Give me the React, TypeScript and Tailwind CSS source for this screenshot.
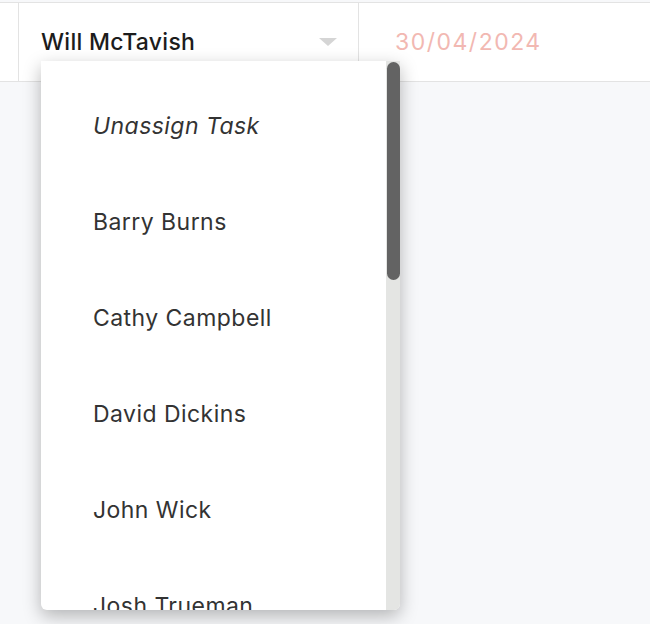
import React from 'react';

const people = ['Barry Burns', 'Cathy Campbell', 'David Dickins', 'John Wick', 'Josh Trueman'];

export default function App() {
  return (
    <div
      className="relative h-[624px] w-[650px] overflow-hidden bg-[#f7f8fa]"
      style={{ fontFamily: 'Inter, "Noto Sans", sans-serif' }}
    >
      <div className="mt-[2px] flex h-[80px] border-y border-[#e3e3e3] bg-white">
        <div className="w-[19px] border-r border-[#e3e3e3]" />
        <div className="flex w-[340px] items-center justify-between border-r border-[#e3e3e3] pl-[22px] pr-[21px]">
          <span className="text-[23px] font-medium tracking-[0.3px] text-[#1c1c1c]">Will McTavish</span>
          <svg width="18" height="8" viewBox="0 0 18 8">
            <path d="M0 0 L18 0 L9 8 Z" fill="#d5d5d5" />
          </svg>
        </div>
        <div className="flex flex-1 items-center pl-[36px]">
          <span className="text-[23px] tracking-[1.5px] text-[#f2b8b2]">30/04/2024</span>
        </div>
      </div>

      <div className="absolute left-[41px] top-[61px] flex h-[549px] w-[359px] overflow-hidden rounded-b-[6px] bg-white shadow-[0_6px_18px_rgba(0,0,0,0.28)]">
        <ul className="flex-1 overflow-hidden pt-[17px] text-[23px] tracking-[0.45px] text-[#333]">
          <li className="flex h-[96px] items-center pl-[52px] italic">Unassign Task</li>
          {people.map((name) => (
            <li key={name} className="flex h-[96px] items-center pl-[52px]">
              {name}
            </li>
          ))}
        </ul>
        <div className="w-[14px] bg-[#e4e5e3] pl-[1px] pt-[1px]">
          <div className="h-[218px] w-[13px] rounded-full bg-[#636363]" />
        </div>
      </div>
    </div>
  );
}
